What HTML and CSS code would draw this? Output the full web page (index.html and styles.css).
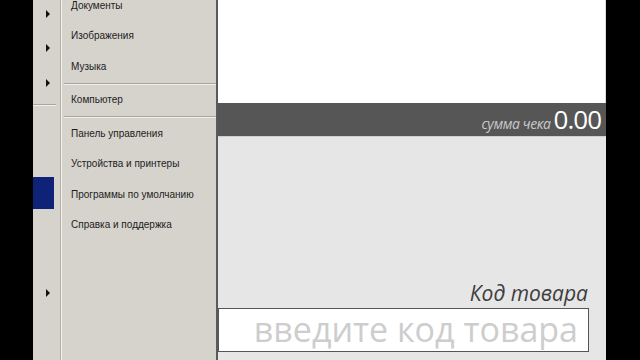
FILE: index.html
```html
<!DOCTYPE html>
<html lang="ru">
<head>
<meta charset="utf-8">
<link rel="stylesheet" href="styles.css">
</head>
<body>
<div class="screen">
  <div class="black-left"></div>
  <div class="strip">
    <span class="arrow a1"></span>
    <span class="arrow a2"></span>
    <span class="arrow a3"></span>
    <span class="strip-sep"></span>
    <span class="strip-sel"></span>
    <span class="arrow a4"></span>
  </div>
  <div class="menu">
    <div class="item">Документы</div>
    <div class="item">Изображения</div>
    <div class="item">Музыка</div>
    <div class="sep"></div>
    <div class="item">Компьютер</div>
    <div class="sep"></div>
    <div class="item">Панель управления</div>
    <div class="item">Устройства и принтеры</div>
    <div class="item">Программы по умолчанию</div>
    <div class="item">Справка и поддержка</div>
  </div>
  <div class="app">
    <div class="top"></div>
    <div class="total">
      <span class="total-label">сумма чека</span>
      <span class="total-value">0.00</span>
    </div>
    <div class="body">
      <div class="code-label">Код товара</div>
      <div class="code-input">введите код товара</div>
    </div>
  </div>
  <div class="black-right"></div>
</div>
</body>
</html>
```
FILE: styles.css
```css
html, body {
  margin: 0;
  padding: 0;
  background: #000;
}
.screen {
  display: flex;
  width: 640px;
  height: 360px;
  overflow: hidden;
  background: #000;
}
.black-left {
  width: 33px;
  flex: none;
}
.strip {
  width: 27px;
  flex: none;
  background: #d6d3cc;
  border-right: 1px solid #b3afa7;
  display: flex;
  flex-direction: column;
}
.arrow {
  display: block;
  flex: none;
  width: 0;
  height: 0;
  border-top: 4px solid transparent;
  border-bottom: 4px solid transparent;
  border-left: 4px solid #111;
  margin-left: 13px;
}
.a1 { margin-top: 10px; }
.a2 { margin-top: 26px; }
.a3 { margin-top: 27px; }
.strip-sep {
  display: block;
  flex: none;
  height: 1px;
  width: 23px;
  background: #a9a59d;
  border-bottom: 1px solid #f2f0ec;
  margin-top: 17px;
}
.strip-sel {
  display: block;
  flex: none;
  width: 21px;
  height: 32px;
  background: #0e2377;
  margin-top: 71px;
}
.a4 { margin-top: 80px; }
.menu {
  width: 154px;
  flex: none;
  background: #d6d3cc;
  border-left: 1px solid #f4f2ee;
  border-right: 2px solid #5a5a5a;
  display: flex;
  flex-direction: column;
}
.item {
  height: 30.5px;
  flex: none;
  display: flex;
  align-items: center;
  padding-left: 9px;
  font-family: "Liberation Sans", Arial, sans-serif;
  font-size: 10px;
  color: #1c1c1c;
}
.item:first-child {
  margin-top: -10px;
}
.sep {
  height: 1px;
  flex: none;
  margin-top: 1px;
  margin-left: 2px;
  background: #a9a59d;
  border-bottom: 1px solid #f2f0ec;
}
.app {
  width: 388px;
  flex: none;
  display: flex;
  flex-direction: column;
  font-family: "Open Sans", sans-serif;
}
.top {
  height: 103px;
  flex: none;
  background: #fff;
  border-right: 1px solid #ddd;
}
.total {
  height: 33px;
  flex: none;
  background: #565656;
  border-bottom: 1px solid #cfcfcf;
  display: flex;
  justify-content: flex-end;
  align-items: baseline;
  padding-right: 5px;
  gap: 3px;
}
.total-label {
  font-style: italic;
  font-size: 14px;
  color: #c9c9c9;
  letter-spacing: -0.4px;
}
.total-value {
  font-size: 26px;
  line-height: 32px;
  letter-spacing: -1px;
  color: #fff;
}
.body {
  flex: 1;
  background: #e6e6e6;
  display: flex;
  flex-direction: column;
  justify-content: flex-end;
  padding-right: 17px;
  padding-bottom: 8px;
}
.code-label {
  text-align: right;
  font-style: italic;
  font-size: 21px;
  line-height: 28px;
  color: #3e3e3e;
  padding-right: 1px;
  margin-bottom: 1px;
}
.code-input {
  height: 42px;
  background: #fff;
  border: 1px solid #555;
  text-align: right;
  padding-right: 10px;
  font-size: 34px;
  line-height: 40px;
  color: #cdcdcd;
}
.black-right {
  flex: 1;
}
```
